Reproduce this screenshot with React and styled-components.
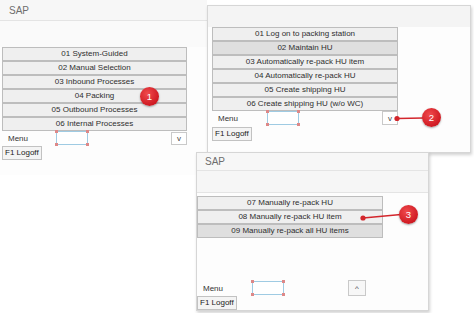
import React from "react";
import styled, { createGlobalStyle } from "styled-components";

const Global = createGlobalStyle`
html, body { margin:0; padding:0; background:#fff; }
body { font-family: "Liberation Sans", Arial, sans-serif; color:#333; }
`

const Canvas = styled.div`
position:relative;
width:474px;
height:313px;
overflow:hidden;
background:#fff;
`

const Window = styled.div`
position:absolute;
left:${p => p.$left}px;
top:${p => p.$top}px;
width:${p => p.$width}px;
height:${p => p.$height}px;
box-sizing:border-box;
display:flex;
flex-direction:column;
background:#fdfdfd;
border:${p => p.$flat ? "none" : "1px solid #d6d6d6"};
box-shadow:${p => p.$flat ? "none" : "1px 2px 3px rgba(0,0,0,0.18)"};
`

const TitleBar = styled.div`
height:${p => p.$h}px;
flex:none;
display:flex;
align-items:center;
padding-left:${p => p.$pad}px;
font-size:10px;
color:#6e6e6e;
background:#f7f7f7;
border-bottom:1px solid #e4e4e4;
`

const Band = styled.div`
height:${p => p.$h}px;
flex:none;
background:${p => p.$bg || "#fafafa"};
border-bottom:${p => p.$line ? "1px solid #e4e4e4" : "none"};
`

const Body = styled.div`
flex:1;
display:flex;
flex-direction:column;
padding:${p => p.$pad};
`

const List = styled.div`
width:${p => p.$w}px;
display:flex;
flex-direction:column;
`

const MenuButton = styled.div`
height:14px;
box-sizing:border-box;
border:1px solid #bdbdbd;
background:${p => p.$active ? "#dfdfdf" : "#efefef"};
font-size:8px;
line-height:12px;
text-align:center;
color:#2e2e2e;
white-space:nowrap;
`

const MenuRow = styled.div`
width:${p => p.$w}px;
height:${p => p.$h || 14}px;
display:flex;
align-items:center;
margin-top:${p => p.$mt || 0}px;
`

const Label = styled.span`
width:${p => p.$w || 55}px;
padding-left:6px;
box-sizing:border-box;
font-size:8px;
color:#333;
flex:none;
`

const Field = styled.div`
position:relative;
width:32px;
height:14px;
box-sizing:border-box;
border:1px solid #9fcbe3;
background:#fff;
flex:none;
&::before, &::after {
  content:'';
  position:absolute;
  left:-2px;
  right:-2px;
  height:3px;
  background:
    linear-gradient(#d88,#d88) left / 3px 3px no-repeat,
    linear-gradient(#d88,#d88) right / 3px 3px no-repeat;
}
&::before { top:-2px; }
&::after { bottom:-2px; }
`

const Arrow = styled.div`
margin-left:${p => p.$ml || "auto"};
width:${p => p.$w || 16}px;
height:${p => p.$h || 13}px;
box-sizing:border-box;
border:1px solid #c9c9c9;
background:${p => p.$bg || "#fff"};
font-size:8px;
display:flex;
align-items:center;
justify-content:center;
color:#444;
flex:none;
`

const Logoff = styled.div`
width:max-content;
height:14px;
box-sizing:border-box;
border:1px solid #c2c2c2;
background:#f4f4f4;
font-size:8px;
line-height:12px;
padding:0 2px;
margin-top:${p => p.$mt || 0}px;
color:#222;
`

const Spacer = styled.div`
flex:1;
`

const Badge = styled.div`
position:absolute;
left:${p => p.$x - 9}px;
top:${p => p.$y - 9}px;
width:19px;
height:19px;
border-radius:50%;
background:radial-gradient(circle at 40% 35%, #f04a4d, #cf1a22 70%, #b5141a);
box-shadow:0 1px 2px rgba(0,0,0,0.35);
color:#fff;
font-size:9.5px;
display:flex;
align-items:center;
justify-content:center;
`

const Overlay = styled.svg`
position:absolute;
left:0;
top:0;
pointer-events:none;
`

const items1 = ["01 System-Guided", "02 Manual Selection", "03 Inbound Processes", "04 Packing", "05 Outbound Processes", "06 Internal Processes"]
const items2 = ["01 Log on to packing station", "02 Maintain HU", "03 Automatically re-pack HU item", "04 Automatically re-pack HU", "05 Create shipping HU", "06 Create shipping HU (w/o WC)"]
const items3 = ["07 Manually re-pack HU", "08 Manually re-pack HU item", "09 Manually re-pack all HU items"]

export default function App() {
  return (
    <Canvas>
      <Global />
      <Window $left={0} $top={0} $width={207} $height={175} $flat>
        <TitleBar $h={20} $pad={9}>SAP</TitleBar>
        <Band $h={26} />
        <Body $pad="0 0 0 2px">
          <List $w={185}>
            {items1.map(t => <MenuButton key={t}>{t}</MenuButton>)}
          </List>
          <MenuRow $w={185}>
            <Label $w={54}>Menu</Label>
            <Field />
            <Arrow>v</Arrow>
          </MenuRow>
          <Logoff $mt={1}>F1 Logoff</Logoff>
        </Body>
      </Window>

      <Window $left={207} $top={5} $width={264} $height={148}>
        <Band $h={21} $bg="#f4f4f4" />
        <Body $pad="0 0 0 4px">
          <List $w={186}>
            {items2.map((t, i) => <MenuButton key={t} $active={i === 1}>{t}</MenuButton>)}
          </List>
          <MenuRow $w={186}>
            <Label>Menu</Label>
            <Field />
            <Arrow $h={14}>v</Arrow>
          </MenuRow>
          <Logoff $mt={2}>F1 Logoff</Logoff>
        </Body>
      </Window>

      <Window $left={196} $top={152} $width={233} $height={159}>
        <TitleBar $h={17} $pad={8}>SAP</TitleBar>
        <Band $h={21} $bg="#f6f6f6" $line />
        <Body $pad="3px 0 0 0">
          <List $w={186}>
            {items3.map((t, i) => <MenuButton key={t} $active={i === 2}>{t}</MenuButton>)}
          </List>
          <Spacer />
          <MenuRow $w={186} $h={16}>
            <Label>Menu</Label>
            <Field />
            <Arrow $ml="64px" $w={18} $h={16} $bg="#f7f7f7">^</Arrow>
          </MenuRow>
          <Logoff>F1 Logoff</Logoff>
        </Body>
      </Window>

      <Overlay width="474" height="313">
        <line x1="397" y1="118.5" x2="424" y2="118" stroke="#d3262c" strokeWidth="1.6" />
        <circle cx="397" cy="118.5" r="2.6" fill="#d3262c" />
        <line x1="363" y1="218" x2="401" y2="214.5" stroke="#d3262c" strokeWidth="1.6" />
        <circle cx="363" cy="218" r="2.6" fill="#d3262c" />
      </Overlay>

      <Badge $x={149} $y={96}>1</Badge>
      <Badge $x={431} $y={117}>2</Badge>
      <Badge $x={408} $y={214}>3</Badge>
    </Canvas>
  )
}
